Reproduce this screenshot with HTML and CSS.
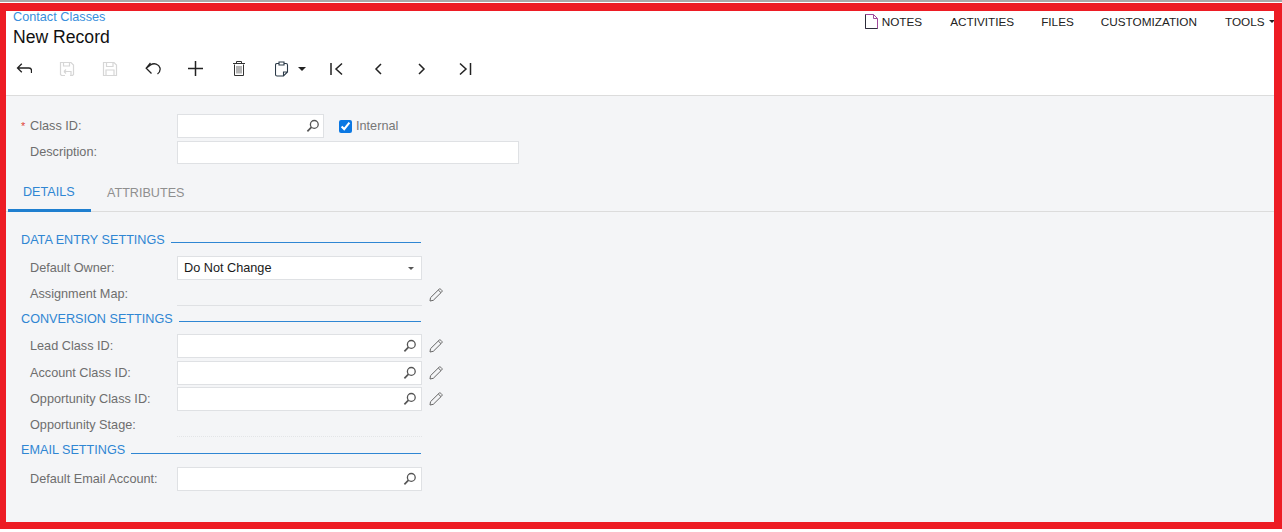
FILE: index.html
```html
<!DOCTYPE html>
<html lang="en">
<head>
<meta charset="utf-8">
<title>Contact Classes</title>
<link rel="stylesheet" href="styles.css">
</head>
<body>
<svg class="defs" width="0" height="0">
  <symbol id="search" viewBox="0 0 14 14"><circle cx="8.300" cy="5.400" r="3.900" fill="none" stroke="currentColor" stroke-width="1.300"/><path d="M5.500 8.200 1.400 12.400" stroke="currentColor" stroke-width="1.700" fill="none"/></symbol>
  <symbol id="pencil" viewBox="0 0 14 14"><path d="M1 13 1.500 9.700 10 1.300C10.600.7 11.200.7 11.800 1.300L12.700 2.200C13.300 2.800 13.300 3.400 12.700 4L4.300 12.300Z" fill="none" stroke="currentColor" stroke-width="1"/><path d="M9.300 2 12 4.700" stroke="currentColor" stroke-width="1" fill="none"/></symbol>
</svg>
<div class="frame">
  <header class="header">
    <div class="header-top">
      <div class="titles">
        <a class="crumb">Contact Classes</a>
        <h1 class="title">New Record</h1>
      </div>
      <nav class="menu">
        <span class="menu-item notes">
          <svg class="note-icon" width="13" height="15" viewBox="0 0 13 15"><path d="M.5.5H8.500L12.500 4.500V14.500H.5Z" fill="#fff" stroke="#a04a9c"/><path d="M.5 14.500H12.500M.5.5V14.500" stroke="#2c2c3a" fill="none"/><path d="M8.500.5V4.500H12.500" fill="none" stroke="#a04a9c"/></svg>
          NOTES
        </span>
        <span class="menu-item">ACTIVITIES</span>
        <span class="menu-item">FILES</span>
        <span class="menu-item">CUSTOMIZATION</span>
        <span class="menu-item tools">TOOLS<i class="caret"></i></span>
      </nav>
    </div>
    <div class="toolbar">
      <span class="tool"><svg width="16" height="14" viewBox="0 0 16 14"><path d="M15.500 11V8.500C15.500 7 14.500 6 13 6H1.500M5.800 1.800 1.500 6l4.300 4.200" fill="none" stroke="#222" stroke-width="1.300"/></svg></span>
      <span class="tool"><svg width="16" height="16" viewBox="0 0 16 16"><path d="M6 14.500H2.500L1.500 13.500V1.500H12L14.500 4V13.500L13.500 14.500H11M4.500 1.500V5H10.500V1.500M5 10.500H12V14M5 10.500 7 8.500M5 10.500 7 12.500" fill="none" stroke="#d6d6d6" stroke-width="1.200"/></svg></span>
      <span class="tool"><svg width="16" height="16" viewBox="0 0 16 16"><path d="M1.500 1.500H12L14.500 4V14.500H1.500ZM4.500 1.500V5.500H11V1.500M4 14.500V9H12V14.500" fill="none" stroke="#d6d6d6" stroke-width="1.200"/></svg></span>
      <span class="tool"><svg width="16" height="14" viewBox="0 0 16 14"><path d="M5.500 1 1.200 6.200 6.500 11.500M1.200 6.200 5.500 3C9 .5 14 2 15 6C15.500 8.500 14.500 10.500 12.500 12" fill="none" stroke="#222" stroke-width="1.300"/></svg></span>
      <span class="tool"><svg width="15" height="15" viewBox="0 0 15 15"><path d="M7.500 0V15M0 7.500H15" stroke="#222" stroke-width="1.500"/></svg></span>
      <span class="tool tool-trash"><svg width="12" height="15" viewBox="0 0 12 15"><path d="M1.500 3.500V14.500H10.500V3.500M0 2.500H12M3.500 2.500V.5H8.500V2.500" fill="none" stroke="#333" stroke-width="1"/><path d="M4 5V12.500M6 5V12.500M8 5V12.500" stroke="#777" stroke-width="1.100"/></svg></span>
      <span class="tool tool-wide"><svg width="14" height="16" viewBox="0 0 14 16"><path d="M4 2.500H2C1 2.500.5 3 .5 4V13.500C.5 14.500 1 15 2 15H8.500L12.500 11V4C12.500 3 12 2.500 11 2.500H9M4 1H9V4H4ZM8.500 15V11H12.500" fill="none" stroke="#2b3a48" stroke-width="1.100"/></svg><i class="caret caret-tool"></i></span>
      <span class="tool"><svg width="14" height="14" viewBox="0 0 14 14"><path d="M1 1V13M12 1.500 6 7l6 5.500" fill="none" stroke="#222" stroke-width="1.500"/></svg></span>
      <span class="tool"><svg width="14" height="14" viewBox="0 0 14 14"><path d="M8 2 3 7 8 12" fill="none" stroke="#222" stroke-width="1.500"/></svg></span>
      <span class="tool"><svg width="14" height="14" viewBox="0 0 14 14"><path d="M3 2 8 7 3 12" fill="none" stroke="#222" stroke-width="1.500"/></svg></span>
      <span class="tool"><svg width="14" height="14" viewBox="0 0 14 14"><path d="M11.500 1V13M1 1.500 7 7l-6 5.500" fill="none" stroke="#222" stroke-width="1.500"/></svg></span>
    </div>
  </header>
  <main class="content">
    <section class="summary">
      <div class="row">
        <label class="label required">Class ID:</label>
        <div class="field field-short"><svg class="search search-short"><use href="#search"/></svg></div>
        <label class="check"><input class="checkbox" type="checkbox" checked>Internal</label>
      </div>
      <div class="row">
        <label class="label">Description:</label>
        <div class="field field-long"></div>
      </div>
    </section>
    <div class="tabs">
      <span class="tab tab-active">DETAILS</span>
      <span class="tab tab-plain">ATTRIBUTES</span>
    </div>
    <section class="details">
      <h2 class="group">DATA ENTRY SETTINGS</h2>
      <div class="row row-owner">
        <label class="label">Default Owner:</label>
        <div class="field field-std select">Do Not Change<i class="select-caret"></i></div>
      </div>
      <div class="row row-map">
        <label class="label">Assignment Map:</label>
        <div class="field-std empty empty-map"></div>
        <svg class="pencil"><use href="#pencil"/></svg>
      </div>
      <h2 class="group">CONVERSION SETTINGS</h2>
      <div class="row">
        <label class="label">Lead Class ID:</label>
        <div class="field field-std"><svg class="search"><use href="#search"/></svg></div>
        <svg class="pencil"><use href="#pencil"/></svg>
      </div>
      <div class="row">
        <label class="label">Account Class ID:</label>
        <div class="field field-std"><svg class="search"><use href="#search"/></svg></div>
        <svg class="pencil"><use href="#pencil"/></svg>
      </div>
      <div class="row">
        <label class="label">Opportunity Class ID:</label>
        <div class="field field-std"><svg class="search"><use href="#search"/></svg></div>
        <svg class="pencil"><use href="#pencil"/></svg>
      </div>
      <div class="row">
        <label class="label">Opportunity Stage:</label>
        <div class="field-std empty empty-faint"></div>
      </div>
      <h2 class="group group-raised">EMAIL SETTINGS</h2>
      <div class="row">
        <label class="label">Default Email Account:</label>
        <div class="field field-std"><svg class="search"><use href="#search"/></svg></div>
      </div>
    </section>
  </main>
</div>
</body>
</html>
```
FILE: styles.css
```css
* { box-sizing: border-box; }
html, body { margin: 0; padding: 0; height: 532px; overflow: hidden; background: #fff; }
body {
  font-family: "Liberation Sans", Arial, sans-serif;
  font-size: 12px;
  border-top: 2px solid #a9a9a9;
  padding-top: 1px;
}
.defs { display: block; height: 0; }
.frame {
  height: 526px;
  border: solid #ed1c24;
  border-width: 8px 8px 7px 6px;
  background: #f4f5f7;
  overflow: hidden;
  display: flex;
  flex-direction: column;
}
.header {
  height: 85px;
  background: #fff;
  border-bottom: 1px solid #dcdcdc;
  flex: none;
}
.header-top { display: flex; justify-content: space-between; height: 41px; padding-left: 7px; }
.titles { display: flex; flex-direction: column; }
.crumb { color: #3a8fdc; font-size: 12.700px; line-height: 12px; }
.title { margin: 2px 0 0; font-size: 17.600px; font-weight: 400; line-height: 24px; color: #111; }
.menu { display: flex; gap: 27px; margin-top: 3px; margin-right: -8px; height: 15px; align-items: center; white-space: nowrap; flex: none; }
.menu-item { color: #222; font-size: 11.750px; line-height: 14px; display: flex; align-items: center; }
.notes { gap: 4px; margin-right: 1px; }
.note-icon { flex: none; }
.tools { gap: 4px; width: 57px; margin-left: 1px; }
.caret { width: 0; height: 0; border: solid transparent; border-width: 3px 3px 0; border-top-color: #222; flex: none; }
.toolbar { display: flex; align-items: center; height: 33px; padding-left: 10px; }
.tool { width: 43px; height: 33px; flex: none; display: flex; align-items: center; }
.tool-trash { padding-left: 2px; }
.tool-wide { gap: 9px; width: 56px; padding-left: 1px; }
.caret-tool { border-width: 4px 4px 0; }
.content { flex: 1; min-height: 0; }
.summary { padding: 17px 0 0 0; }
.row { display: flex; align-items: center; height: 26.400px; padding-left: 24px; }
.row-owner { margin-top: 1px; }
.row-map { margin-bottom: -2px; }
.label { width: 147px; flex: none; color: #6e6e6e; font-size: 12.700px; position: relative; }
.summary .label, .row-map .label { margin-top: -1px; }
.required::before { content: "*"; color: #e0433a; position: absolute; left: -9px; top: 1px; font-size: 11px; }
.field {
  height: 24px;
  background: #fff;
  border: 1px solid #dfe1e4;
  display: flex;
  align-items: center;
  position: relative;
  flex: none;
  color: #1a1a1a;
  font-size: 12.700px;
}
.field-short { width: 147px; }
.field-long { width: 342px; height: 23px; }
.field-std { width: 245px; flex: none; }
.search { position: absolute; right: 4px; top: 4px; width: 14px; height: 14px; color: #555; }
.search-short { right: 3px; }
.check { display: flex; align-items: center; color: #777; margin-left: 15px; font-size: 12.700px; }
.checkbox { width: 13px; height: 13px; margin: 0 4px 0 0; accent-color: #0b78e3; }
.tabs { display: flex; height: 42px; margin-top: 4px; padding-left: 2px; border-bottom: 1px solid #dcdcdc; }
.tab { height: 42px; color: #8f8f8f; padding: 0 15px; line-height: 46px; font-size: 12.600px; }
.tab-active { color: #2f86d3; border-bottom: 3px solid #1f7fd0; width: 83px; line-height: 45px; }
.tab-plain { padding-left: 16px; }
.details { padding-top: 15.500px; }
.group {
  display: flex;
  align-items: center;
  gap: 6px;
  margin: 0 0 0 15px;
  width: 400px;
  height: 27px;
  padding-bottom: 2px;
  font-size: 12.650px;
  font-weight: 400;
  color: #2f86d3;
  white-space: nowrap;
}
.group-raised { margin-top: -1px; margin-bottom: 1px; }
.group::after { content: ""; flex: 1; height: 1px; background: #2f86d3; margin-top: 6px; }
.select { padding-left: 6px; justify-content: flex-start; }
.select-caret { position: absolute; right: 7px; top: 10px; width: 0; height: 0; border: solid transparent; border-width: 3px 3px 0; border-top-color: #555; }
.empty { height: 24px; border-bottom: 1px solid #dfe1e4; }
.empty-map { height: 23px; }
.empty-faint { border-bottom: 1px dotted #e3e5e7; }
.pencil { width: 14px; height: 14px; color: #666; margin-left: 7px; flex: none; }
```
